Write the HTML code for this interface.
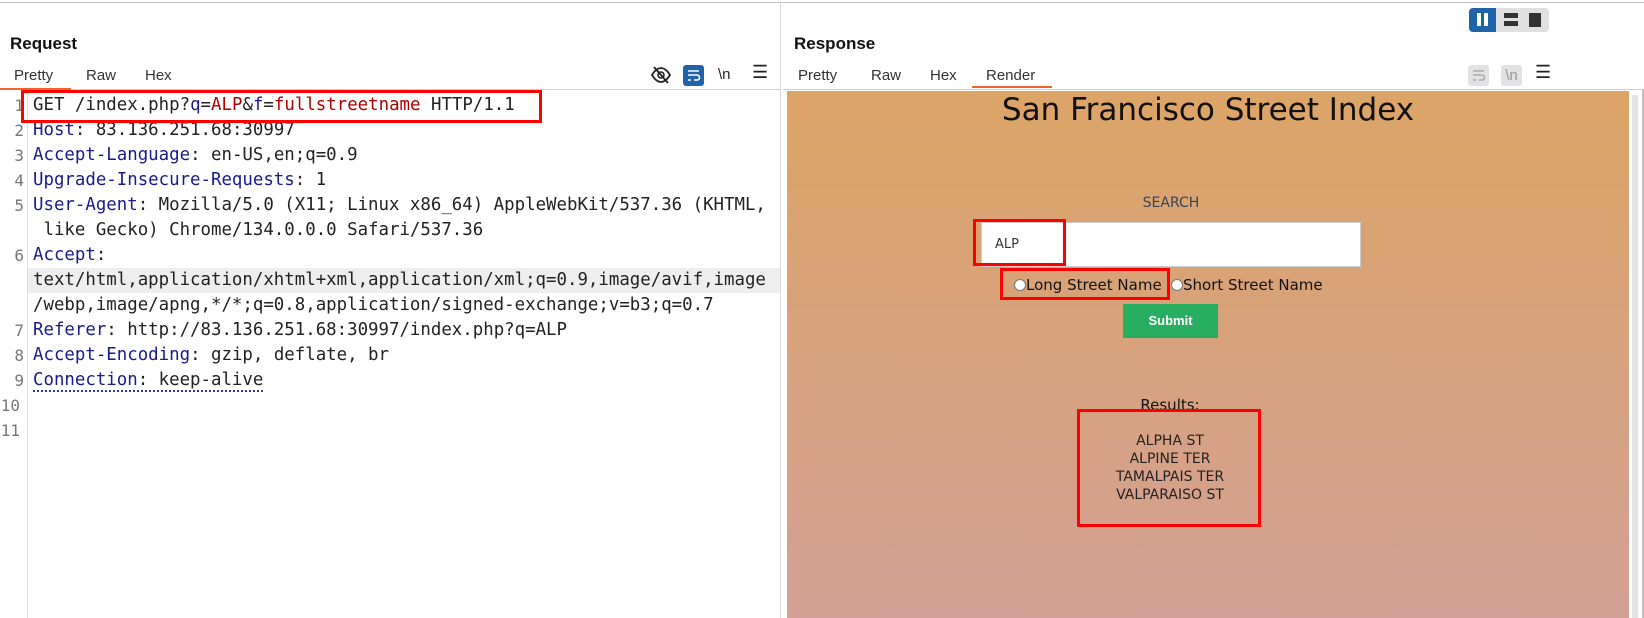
<!DOCTYPE html>
<html><head><meta charset="utf-8"><style>
*{margin:0;padding:0;box-sizing:border-box}
body{width:1644px;height:618px;overflow:hidden;background:#fff;font-family:"Liberation Sans",sans-serif;position:relative}
.a{position:absolute;white-space:nowrap}
.h{font-weight:bold;font-size:17px;color:#111}
.tab{font-size:15px;color:#333}
.code{font-family:"DejaVu Sans Mono","Liberation Mono",monospace;font-size:17.4px;color:#222}
.k{color:#1a1a8a}.r{color:#b00000}
.ln{font-family:"DejaVu Sans Mono",monospace;font-size:16px;color:#777;width:24px;text-align:right}
.red{position:absolute;border:3px solid #f00}
.m{font-family:"DejaVu Sans","Liberation Sans",sans-serif}
</style></head><body>
<div class="a" style="left:0;top:2px;width:1644px;height:1px;background:#c8c0c4"></div>
<div class="a" style="left:780px;top:3px;width:1px;height:615px;background:#d8d8d8"></div>
<div class="a h" style="left:10px;top:34px">Request</div>
<div class="a tab" style="left:14px;top:67px">Pretty</div>
<div class="a tab" style="left:86px;top:67px">Raw</div>
<div class="a tab" style="left:145px;top:67px">Hex</div>
<div class="a" style="left:0;top:88px;width:71px;height:2px;background:#f0642a"></div>
<div class="a" style="left:71px;top:89px;width:709px;height:1px;background:#d0d0d0"></div>
<svg class="a" style="left:650px;top:65px" width="22" height="20" viewBox="0 0 22 20"><path d="M2 10C5 5 8 3 11 3s6 2 9 7c-3 5-6 7-9 7s-6-2-9-7z" fill="none" stroke="#222" stroke-width="1.8"/><circle cx="11" cy="10" r="3" fill="none" stroke="#222" stroke-width="1.6"/><path d="M4 2L18 18" stroke="#222" stroke-width="1.8"/></svg>
<div class="a" style="left:683px;top:65px;width:21px;height:21px;background:#1f64a8;border-radius:3px"></div>
<svg class="a" style="left:683px;top:65px" width="21" height="21"><path d="M5 6h11M5 10h9a2.5 2.5 0 010 5h-3M5 15h3" stroke="#fff" stroke-width="1.6" fill="none"/></svg>
<div class="a" style="left:718px;top:66px;font-size:15px;color:#222">\n</div>
<div class="a" style="left:752px;top:62px;font-size:18px;color:#222">☰</div>
<div class="a" style="left:27px;top:90px;width:1px;height:528px;background:#ddd"></div>
<div class="a" style="left:28px;top:268px;width:752px;height:25px;background:#eeeeee"></div>
<div class="a ln" style="left:0;top:96px">1</div>
<div class="a ln" style="left:0;top:121px">2</div>
<div class="a ln" style="left:0;top:146px">3</div>
<div class="a ln" style="left:0;top:171px">4</div>
<div class="a ln" style="left:0;top:196px">5</div>
<div class="a ln" style="left:0;top:246px">6</div>
<div class="a ln" style="left:0;top:321px">7</div>
<div class="a ln" style="left:0;top:346px">8</div>
<div class="a ln" style="left:0;top:371px">9</div>
<div class="a ln" style="left:-4px;top:396px">10</div>
<div class="a ln" style="left:-4px;top:421px">11</div>
<div class="a code" style="left:33px;top:95px">GET /index.php?<span class="k">q</span>=<span class="r">ALP</span>&amp;<span class="k">f</span>=<span class="r">fullstreetname</span> HTTP/1.1</div>
<div class="a code" style="left:33px;top:120px"><span class="k">Host</span>: 83.136.251.68:30997</div>
<div class="a code" style="left:33px;top:145px"><span class="k">Accept-Language</span>: en-US,en;q=0.9</div>
<div class="a code" style="left:33px;top:170px"><span class="k">Upgrade-Insecure-Requests</span>: 1</div>
<div class="a code" style="left:33px;top:195px"><span class="k">User-Agent</span>: Mozilla/5.0 (X11; Linux x86_64) AppleWebKit/537.36 (KHTML,</div>
<div class="a code" style="left:33px;top:220px">&nbsp;like Gecko) Chrome/134.0.0.0 Safari/537.36</div>
<div class="a code" style="left:33px;top:245px"><span class="k">Accept</span>:</div>
<div class="a code" style="left:33px;top:270px">text/html,application/xhtml+xml,application/xml;q=0.9,image/avif,image</div>
<div class="a code" style="left:33px;top:295px">/webp,image/apng,*/*;q=0.8,application/signed-exchange;v=b3;q=0.7</div>
<div class="a code" style="left:33px;top:320px"><span class="k">Referer</span>: http://83.136.251.68:30997/index.php?q=ALP</div>
<div class="a code" style="left:33px;top:345px"><span class="k">Accept-Encoding</span>: gzip, deflate, br</div>
<div class="a code" style="left:33px;top:370px"><span class="k">Connection</span>: keep-alive</div>
<div class="a" style="left:33px;top:390px;width:230px;border-top:2px dotted #2a3aa0"></div>
<div class="red" style="left:21px;top:90px;width:521px;height:33px"></div>
<div class="a" style="left:1469px;top:8px;width:80px;height:24px;background:#e0e0e0;border-radius:4px"></div>
<div class="a" style="left:1469px;top:8px;width:27px;height:24px;background:#1f64a8;border-radius:4px 0 0 4px"></div>
<div class="a" style="left:1477px;top:13px;width:4px;height:13px;background:#fff"></div>
<div class="a" style="left:1484px;top:13px;width:4px;height:13px;background:#fff"></div>
<div class="a" style="left:1504px;top:13px;width:14px;height:5px;background:#333"></div>
<div class="a" style="left:1504px;top:21px;width:14px;height:5px;background:#333"></div>
<div class="a" style="left:1529px;top:13px;width:12px;height:14px;background:#333"></div>
<div class="a h" style="left:794px;top:34px">Response</div>
<div class="a tab" style="left:798px;top:67px">Pretty</div>
<div class="a tab" style="left:871px;top:67px">Raw</div>
<div class="a tab" style="left:930px;top:67px">Hex</div>
<div class="a tab" style="left:986px;top:67px">Render</div>
<div class="a" style="left:972px;top:86px;width:80px;height:2px;background:#f0642a"></div>
<div class="a" style="left:1468px;top:65px;width:21px;height:21px;background:#e2e2e2;border-radius:3px"></div>
<svg class="a" style="left:1468px;top:65px" width="21" height="21"><path d="M5 6h11M5 10h9a2.5 2.5 0 010 5h-3M5 15h3" stroke="#aaa" stroke-width="1.6" fill="none"/></svg>
<div class="a" style="left:1501px;top:65px;width:21px;height:21px;background:#e2e2e2;border-radius:3px;color:#999;font-size:15px;text-align:center;line-height:21px">\n</div>
<div class="a" style="left:1535px;top:62px;font-size:18px;color:#222">☰</div>
<div class="a" style="left:783px;top:89px;width:861px;height:1px;background:#d0d0d0"></div>
<div class="a" style="left:787px;top:91px;width:842px;height:527px;background:linear-gradient(#dca466,#d3a095)"></div>
<div class="a" style="left:1632px;top:95px;width:6px;height:523px;background:#e4e4e4"></div>
<div class="a" style="left:1642px;top:90px;width:2px;height:528px;background:#c8c0c4"></div>
<div class="a m" style="left:787px;width:842px;top:92px;text-align:center;font-size:31px;color:#111">San Francisco Street Index</div>
<div class="a m" style="left:787px;width:768px;top:195px;text-align:center;font-size:14px;color:#34455a">SEARCH</div>
<div class="a" style="left:981px;top:222px;width:380px;height:45px;background:#fff;border:1px solid #ccc"></div>
<div class="a m" style="left:995px;top:237px;font-size:13px;color:#333">ALP</div>
<div class="red" style="left:973px;top:219px;width:93px;height:47px"></div>
<div class="a" style="left:1014px;top:279px;width:12px;height:12px;border-radius:50%;background:#fff;border:1px solid #777"></div>
<div class="a m" style="left:1026px;top:276px;font-size:15px;color:#111">Long Street Name</div>
<div class="a" style="left:1171px;top:279px;width:12px;height:12px;border-radius:50%;background:#fff;border:1px solid #777"></div>
<div class="a m" style="left:1183px;top:276px;font-size:15px;color:#111">Short Street Name</div>
<div class="red" style="left:1000px;top:268px;width:170px;height:32px"></div>
<div class="a" style="left:1123px;top:304px;width:95px;height:34px;background:#27ae60;color:#fff;font-weight:bold;font-size:13px;text-align:center;line-height:34px">Submit</div>
<div class="a m" style="left:1080px;width:180px;top:396px;text-align:center;font-size:15px;color:#111">Results:</div>
<div class="a m" style="left:1080px;width:180px;top:432px;text-align:center;font-size:14px;line-height:18px;color:#222">ALPHA ST<br>ALPINE TER<br>TAMALPAIS TER<br>VALPARAISO ST</div>
<div class="red" style="left:1077px;top:409px;width:184px;height:118px"></div>
</body></html>
